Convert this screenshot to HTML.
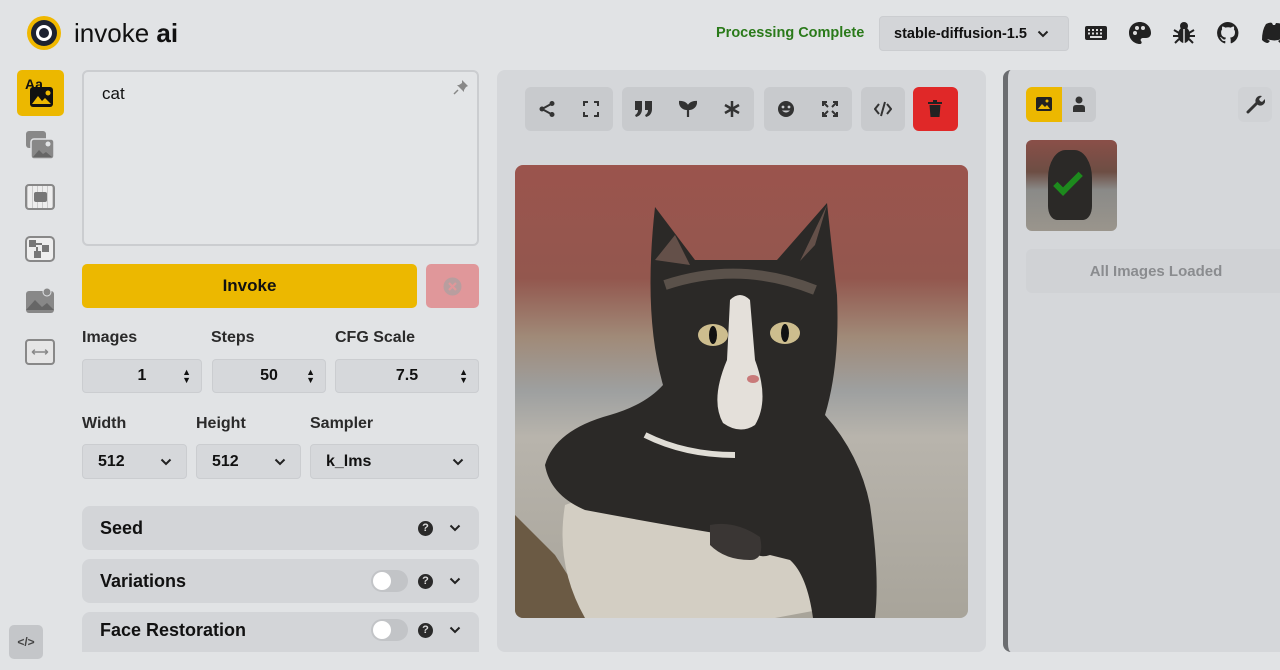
<!DOCTYPE html>
<html><head><meta charset="utf-8"><style>
*{box-sizing:border-box;margin:0;padding:0}
body{width:1280px;height:670px;overflow:hidden;background:#e1e3e5;font-family:"Liberation Sans",sans-serif;color:#111;position:relative}
.a{position:absolute}
.lbl{font-size:16px;font-weight:bold;color:#2a2a2a}
.fld{background:#d6d8db;border:1px solid #cbcdd0;border-radius:4px;font-size:16px;font-weight:bold;display:flex;align-items:center}
.acc{background:#d3d5d8;border-radius:8px;height:44px;display:flex;align-items:center;padding:0 18px;font-size:18px;font-weight:bold}
.q{width:15px;height:15px;border-radius:50%;background:#2a2a2a;color:#ddd;font-size:11px;display:inline-flex;align-items:center;justify-content:center;font-weight:bold}
.tg{width:37px;height:22px;border-radius:11px;background:#c2c4c7;position:relative}
.tg:after{content:"";position:absolute;left:2px;top:2px;width:18px;height:18px;border-radius:50%;background:#fff}
.grp{background:#c8cacd;border-radius:6px;height:44px;display:flex;align-items:center;position:absolute;top:87px}
.grp>span{width:44px;display:flex;align-items:center;justify-content:center}
.side{position:absolute;left:25px;width:30px;height:26px;border:2px solid #888;border-radius:4px;background:#e6e6e6}
.chev{position:absolute;right:14px;top:50%;margin-top:-4px}
</style></head><body>
<svg width="0" height="0" style="position:absolute"><defs><symbol id="cv" viewBox="0 0 12 8"><path d="M1.5 1.5 L6 6 L10.5 1.5" fill="none" stroke="#222" stroke-width="2"/></symbol></defs></svg>
<!-- header -->
<div class="a" style="left:27px;top:16px;width:34px;height:34px;border-radius:50%;background:#f0b800"></div>
<div class="a" style="left:31px;top:20px;width:26px;height:26px;border-radius:50%;background:#1d2230"></div>
<div class="a" style="left:36px;top:25px;width:16px;height:16px;border-radius:50%;border:3px solid #fff;background:#1d2230"></div>
<div class="a" style="left:74px;top:18px;font-size:26px;color:#111">invoke <b>ai</b></div>
<div class="a" style="left:716px;top:25px;font-size:14.5px;font-weight:bold;color:#2a7a1a">Processing Complete</div>
<div class="a fld" style="left:879px;top:16px;width:190px;height:35px;padding-left:14px;font-size:14.5px;background:#d3d5d8">stable-diffusion-1.5 <svg style="margin-left:10px" width="12" height="8"><use href="#cv"/></svg></div>
<svg class="a" style="left:1084px;top:23px" width="24" height="20" viewBox="0 0 24 20"><rect x="1" y="3" width="22" height="14" rx="2" fill="#222"/><g fill="#ddd"><rect x="4" y="6" width="2" height="2"/><rect x="8" y="6" width="2" height="2"/><rect x="12" y="6" width="2" height="2"/><rect x="16" y="6" width="2" height="2"/><rect x="4" y="9.5" width="2" height="2"/><rect x="8" y="9.5" width="2" height="2"/><rect x="12" y="9.5" width="2" height="2"/><rect x="16" y="9.5" width="2" height="2"/><rect x="6" y="13" width="12" height="2"/></g></svg>
<svg class="a" style="left:1128px;top:21px" width="24" height="24" viewBox="0 0 24 24"><path d="M12 1C5 1 1 6 1 12s5 11 11 11c2 0 2-2 1-3s0-3 2-3h3c3 0 5-2 5-5C23 6 18 1 12 1z" fill="#222"/><circle cx="7" cy="12" r="2" fill="#ddd"/><circle cx="9" cy="7" r="2" fill="#ddd"/><circle cx="15" cy="7" r="2" fill="#ddd"/></svg>
<svg class="a" style="left:1172px;top:21px" width="24" height="24" viewBox="0 0 24 24"><ellipse cx="12" cy="14" rx="6" ry="8" fill="#222"/><circle cx="12" cy="5" r="4" fill="#222"/><path d="M2 9l5 3M22 9l-5 3M1 15h6M23 15h-6M3 22l4-4M21 22l-4-4" stroke="#222" stroke-width="2"/><path d="M12 8v14" stroke="#ddd" stroke-width="1.5"/></svg>
<svg class="a" style="left:1216px;top:21px" width="24" height="24" viewBox="0 0 24 24"><path d="M12 1a11 11 0 0 0-3.5 21.4c.6.1.8-.2.8-.5v-2c-3 .7-3.7-1.4-3.7-1.4-.5-1.3-1.2-1.6-1.2-1.6-1-.7.1-.7.1-.7 1.1.1 1.7 1.1 1.7 1.1 1 1.7 2.6 1.2 3.2.9.1-.7.4-1.2.7-1.5-2.4-.3-5-1.2-5-5.4 0-1.2.4-2.2 1.1-2.9-.1-.3-.5-1.4.1-2.9 0 0 .9-.3 3 1.1a10 10 0 0 1 5.5 0c2.1-1.4 3-1.1 3-1.1.6 1.5.2 2.6.1 2.9.7.8 1.1 1.7 1.1 2.9 0 4.2-2.6 5.1-5 5.4.4.3.7 1 .7 2v3c0 .3.2.6.8.5A11 11 0 0 0 12 1z" fill="#222"/></svg>
<svg class="a" style="left:1261px;top:22px" width="26" height="22" viewBox="0 0 26 22"><path d="M5 2Q9 0 11 1L12 3h2l1-2q3 0 6 1 4 6 4 16-3 3-6 3l-2-2q2-1 3-2-6 3-14 0 1 1 3 2l-2 2q-3 0-6-3 0-10 4-16z" fill="#222"/></svg>
<!-- sidebar -->
<div class="a" style="left:17px;top:70px;width:47px;height:46px;background:#ecb800;border-radius:5px"></div>
<svg class="a" style="left:25px;top:76px" width="32" height="34" viewBox="0 0 32 34"><text x="0" y="13" font-family="Liberation Sans" font-weight="bold" font-size="14" fill="#111">Aa</text><rect x="5" y="11" width="23" height="20" rx="3" fill="#111"/><path d="M7 28l6-8 4 5 3-3 6 6z" fill="#ecb800"/><circle cx="23" cy="17" r="2.5" fill="#ecb800"/></svg>
<svg class="a" style="left:25px;top:130px" width="30" height="30" viewBox="0 0 30 30"><rect x="1" y="1" width="20" height="17" rx="3" fill="#888"/><rect x="6" y="9" width="23" height="20" rx="3" fill="#888" stroke="#e1e3e5" stroke-width="1.5"/><circle cx="23" cy="14" r="2.5" fill="#e1e3e5"/><path d="M8 27l6-7 4 4 3-2 6 5z" fill="#666"/></svg>
<div class="side" style="top:184px;background:repeating-linear-gradient(90deg,#ccc 0 1px,#eee 1px 5px)"><div style="position:absolute;left:7px;top:6px;width:13px;height:10px;background:#777;border-radius:2px"></div></div>
<svg class="a" style="left:25px;top:236px" width="30" height="26" viewBox="0 0 30 26"><rect x="1" y="1" width="28" height="24" rx="4" fill="#eee" stroke="#888" stroke-width="2"/><rect x="4" y="4" width="7" height="7" fill="#777"/><rect x="17" y="9" width="7" height="7" fill="#777"/><rect x="9" y="15" width="7" height="7" fill="#777"/><path d="M11 8h6M12 11v4" stroke="#777" stroke-width="2"/></svg>
<svg class="a" style="left:25px;top:286px" width="30" height="28" viewBox="0 0 30 28"><rect x="1" y="5" width="28" height="22" rx="3" fill="#888"/><path d="M1 24l9-10 7 7 5-4 7 7z" fill="#666"/><circle cx="22" cy="6" r="4" fill="#888" stroke="#e1e3e5"/></svg>
<div class="side" style="top:339px;display:flex;align-items:center;justify-content:center;color:#888;font-weight:bold;font-size:12px">⟷</div>
<div class="a" style="left:9px;top:625px;width:34px;height:34px;background:#c4c6c9;border-radius:5px;font-size:12px;font-weight:bold;display:flex;align-items:center;justify-content:center;color:#444">&lt;/&gt;</div>
<!-- prompt -->
<div class="a" style="left:82px;top:70px;width:397px;height:176px;border:2px solid #cbcdd0;border-radius:6px;background:#e3e5e7;padding:12px 18px;font-size:17px">cat</div>
<svg class="a" style="left:453px;top:79px" width="16" height="16" viewBox="0 0 16 16"><path d="M9 1l6 6-2 1-2 3 0 2-7-7h2l3-2z" fill="#888"/><path d="M5 11l-4 4" stroke="#888" stroke-width="1.5"/></svg>
<div class="a" style="left:82px;top:264px;width:335px;height:44px;background:#ecb800;border-radius:5px;font-size:17px;font-weight:bold;display:flex;align-items:center;justify-content:center">Invoke</div>
<div class="a" style="left:426px;top:264px;width:53px;height:44px;background:#e0979a;border-radius:5px;display:flex;align-items:center;justify-content:center"><svg width="19" height="19" viewBox="0 0 19 19"><circle cx="9.5" cy="9.5" r="9" fill="#b89e9f"/><path d="M6 6l7 7M13 6l-7 7" stroke="#e0979a" stroke-width="2.2"/></svg></div>
<div class="a lbl" style="left:82px;top:329px">Images</div>
<div class="a lbl" style="left:211px;top:329px">Steps</div>
<div class="a lbl" style="left:335px;top:329px">CFG Scale</div>
<div class="a fld" style="left:82px;top:359px;width:120px;height:34px;justify-content:center">1<span style="position:absolute;right:10px;font-size:9px;line-height:8px">▲<br>▼</span></div>
<div class="a fld" style="left:212px;top:359px;width:114px;height:34px;justify-content:center">50<span style="position:absolute;right:10px;font-size:9px;line-height:8px">▲<br>▼</span></div>
<div class="a fld" style="left:335px;top:359px;width:144px;height:34px;justify-content:center">7.5<span style="position:absolute;right:10px;font-size:9px;line-height:8px">▲<br>▼</span></div>
<div class="a lbl" style="left:82px;top:415px">Width</div>
<div class="a lbl" style="left:196px;top:415px">Height</div>
<div class="a lbl" style="left:310px;top:415px">Sampler</div>
<div class="a fld" style="left:82px;top:444px;width:105px;height:35px;padding-left:15px">512<svg class="chev" width="12" height="8"><use href="#cv"/></svg></div>
<div class="a fld" style="left:196px;top:444px;width:105px;height:35px;padding-left:15px">512<svg class="chev" width="12" height="8"><use href="#cv"/></svg></div>
<div class="a fld" style="left:310px;top:444px;width:169px;height:35px;padding-left:15px">k_lms<svg class="chev" width="12" height="8"><use href="#cv"/></svg></div>
<div class="a acc" style="left:82px;top:506px;width:397px">Seed<span style="margin-left:auto" class="q">?</span><svg style="margin-left:16px" width="12" height="8"><use href="#cv"/></svg></div>
<div class="a acc" style="left:82px;top:559px;width:397px">Variations<span style="margin-left:auto" class="tg"></span><span style="margin-left:10px" class="q">?</span><svg style="margin-left:16px" width="12" height="8"><use href="#cv"/></svg></div>
<div class="a acc" style="left:82px;top:612px;width:397px;height:40px;border-radius:8px 8px 0 0;padding-bottom:4px">Face Restoration<span style="margin-left:auto" class="tg"></span><span style="margin-left:10px" class="q">?</span><svg style="margin-left:16px" width="12" height="8"><use href="#cv"/></svg></div>
<!-- center -->
<div class="a" style="left:497px;top:70px;width:489px;height:582px;background:#d5d7da;border-radius:8px"></div>
<div class="grp" style="left:525px;width:88px">
<span><svg width="18" height="18" viewBox="0 0 18 18"><circle cx="14" cy="3.5" r="2.5" fill="#333"/><circle cx="4" cy="9" r="2.5" fill="#333"/><circle cx="14" cy="14.5" r="2.5" fill="#333"/><path d="M14 3.5L4 9l10 5.5" stroke="#333" stroke-width="2" fill="none"/></svg></span>
<span><svg width="16" height="16" viewBox="0 0 16 16"><path d="M1 5V1h4M11 1h4v4M15 11v4h-4M5 15H1v-4" stroke="#333" stroke-width="2" fill="none"/></svg></span></div>
<div class="grp" style="left:622px;width:132px">
<span><svg width="20" height="18" viewBox="0 0 20 18"><path d="M1 1h7v8c0 4-2 7-6 8l-1-2c2-1 3-3 3-5H1zM11 1h7v8c0 4-2 7-6 8l-1-2c2-1 3-3 3-5h-3z" fill="#333"/></svg></span>
<span><svg width="18" height="18" viewBox="0 0 18 18"><path d="M9 17V9C9 4 5 2 1 2c0 4 3 7 8 7M9 9c0-4 3-7 8-7 0 4-3 7-8 7" stroke="#333" stroke-width="2.2" fill="#333"/></svg></span>
<span><svg width="18" height="18" viewBox="0 0 18 18"><path d="M9 1v16M2 5l14 8M16 5L2 13" stroke="#333" stroke-width="2.5"/></svg></span></div>
<div class="grp" style="left:764px;width:88px">
<span><svg width="18" height="18" viewBox="0 0 18 18"><circle cx="9" cy="9" r="8" fill="#333"/><circle cx="6" cy="7" r="1.4" fill="#c8cacd"/><circle cx="12" cy="7" r="1.4" fill="#c8cacd"/><path d="M5 10.5q4 4 8 0z" fill="#c8cacd"/></svg></span>
<span><svg width="18" height="18" viewBox="0 0 18 18"><path d="M2 2l5 5M16 2l-5 5M2 16l5-5M16 16l-5-5M2 6V2h4M12 2h4v4M16 12v4h-4M6 16H2v-4" stroke="#333" stroke-width="2" fill="none"/></svg></span></div>
<div class="grp" style="left:861px;width:44px"><span><svg width="18" height="16" viewBox="0 0 18 16"><path d="M5 3L1 8l4 5M13 3l4 5-4 5M11 1L7 15" stroke="#333" stroke-width="2" fill="none"/></svg></span></div>
<div class="grp" style="left:913px;width:45px;background:#e02828"><span><svg width="16" height="18" viewBox="0 0 16 18"><path d="M1 3h14M6 1h4" stroke="#222" stroke-width="2"/><path d="M2.5 5h11l-1 12h-9z" fill="#222"/></svg></span></div>
<svg class="a" style="left:515px;top:165px;border-radius:8px" width="453" height="453" viewBox="0 0 453 453">
<defs><linearGradient id="g" x1="0" y1="0" x2="0" y2="1"><stop offset="0" stop-color="#9b544d"/><stop offset=".25" stop-color="#93574e"/><stop offset=".38" stop-color="#a08a78"/><stop offset=".5" stop-color="#9ea0a0"/><stop offset=".6" stop-color="#b8b4ac"/><stop offset="1" stop-color="#a8a49a"/></linearGradient></defs>
<rect width="453" height="453" fill="url(#g)"/>
<path d="M0 350 L0 453 L80 453 L40 390Z" fill="#6b5a44"/>
<path d="M50 340 Q160 300 290 350 L330 440 L260 453 L70 453 Q40 400 50 340Z" fill="#d3cec3"/>
<path d="M140 42 L180 95 L262 95 L312 38 L322 130 Q325 200 310 250 Q345 290 355 340 Q365 410 360 453 L298 453 Q292 410 275 395 L255 390 Q240 395 235 380 L212 370 Q150 360 70 345 Q35 330 30 300 Q40 265 95 250 Q130 240 148 220 Q128 150 140 42Z" fill="#2b2927"/>
<path d="M195 360 Q220 355 245 372 Q250 395 235 395 Q210 395 195 380Z" fill="#3a3634"/>
<path d="M150 120 Q225 95 300 125" stroke="#5a514a" stroke-width="10" fill="none"/>
<path d="M215 135 Q225 125 235 135 L240 195 Q255 235 240 260 Q225 270 208 258 Q195 235 212 195Z" fill="#e4e0da"/>
<ellipse cx="198" cy="170" rx="15" ry="11" fill="#cdbd8e"/><ellipse cx="270" cy="168" rx="15" ry="11" fill="#cdbd8e"/>
<ellipse cx="198" cy="170" rx="4" ry="9" fill="#111"/><ellipse cx="270" cy="168" rx="4" ry="9" fill="#111"/>
<ellipse cx="238" cy="214" rx="6" ry="4" fill="#c97a7a"/>
<path d="M130 270 Q170 290 220 290" stroke="#e0ddd6" stroke-width="6" fill="none"/>
<path d="M140 95 L160 70 L175 100Z M312 40 L300 80 L285 96Z" fill="#8a6a60" opacity=".6"/>
</svg>
<!-- right -->
<div class="a" style="left:1003px;top:70px;width:290px;height:582px;background:#d5d7da;border-radius:8px 0 0 8px;border-left:5px solid #6b6d70"></div>
<div class="a" style="left:1026px;top:87px;width:36px;height:35px;background:#ecb800;border-radius:6px 0 0 6px"></div>
<svg class="a" style="left:1035px;top:96px" width="18" height="16" viewBox="0 0 18 16"><rect x="1" y="1" width="16" height="14" rx="2" fill="#222"/><path d="M3 13l4-5 3 3 2-2 3 4z" fill="#ecb800"/><circle cx="12" cy="5" r="1.5" fill="#ecb800"/></svg>
<div class="a" style="left:1062px;top:87px;width:34px;height:35px;background:#c8cacd;border-radius:0 6px 6px 0"></div>
<svg class="a" style="left:1072px;top:96px" width="14" height="16" viewBox="0 0 14 16"><circle cx="7" cy="4" r="3.5" fill="#333"/><path d="M1 16v-4q0-3 3-3h6q3 0 3 3v4z" fill="#333"/></svg>
<div class="a" style="left:1238px;top:87px;width:34px;height:35px;background:#d0d2d5;border-radius:6px"></div>
<svg class="a" style="left:1245px;top:94px" width="20" height="20" viewBox="0 0 20 20"><path d="M3 18l9-9" stroke="#333" stroke-width="3" stroke-linecap="round"/><path d="M11 9a5 5 0 0 1 6-7l-3 3 1 2 2 1 3-3a5 5 0 0 1-7 6z" fill="#333"/></svg>
<div class="a" style="left:1026px;top:140px;width:91px;height:91px;border-radius:6px;background:linear-gradient(#8a4f48,#6d4e44 35%,#8a8a88 55%,#9a958c);overflow:hidden">
<div style="position:absolute;left:22px;top:10px;width:44px;height:70px;background:#2b2927;border-radius:40% 40% 20% 20%"></div>
<div style="position:absolute;left:28px;top:34px;width:28px;height:14px;border-left:6px solid #1d8a1d;border-bottom:6px solid #1d8a1d;transform:rotate(-45deg)"></div></div>
<div class="a" style="left:1026px;top:249px;width:260px;height:44px;background:#d0d2d5;border-radius:6px;font-size:15px;font-weight:bold;color:#8a8c8f;display:flex;align-items:center;justify-content:center">All Images Loaded</div>
</body></html>
